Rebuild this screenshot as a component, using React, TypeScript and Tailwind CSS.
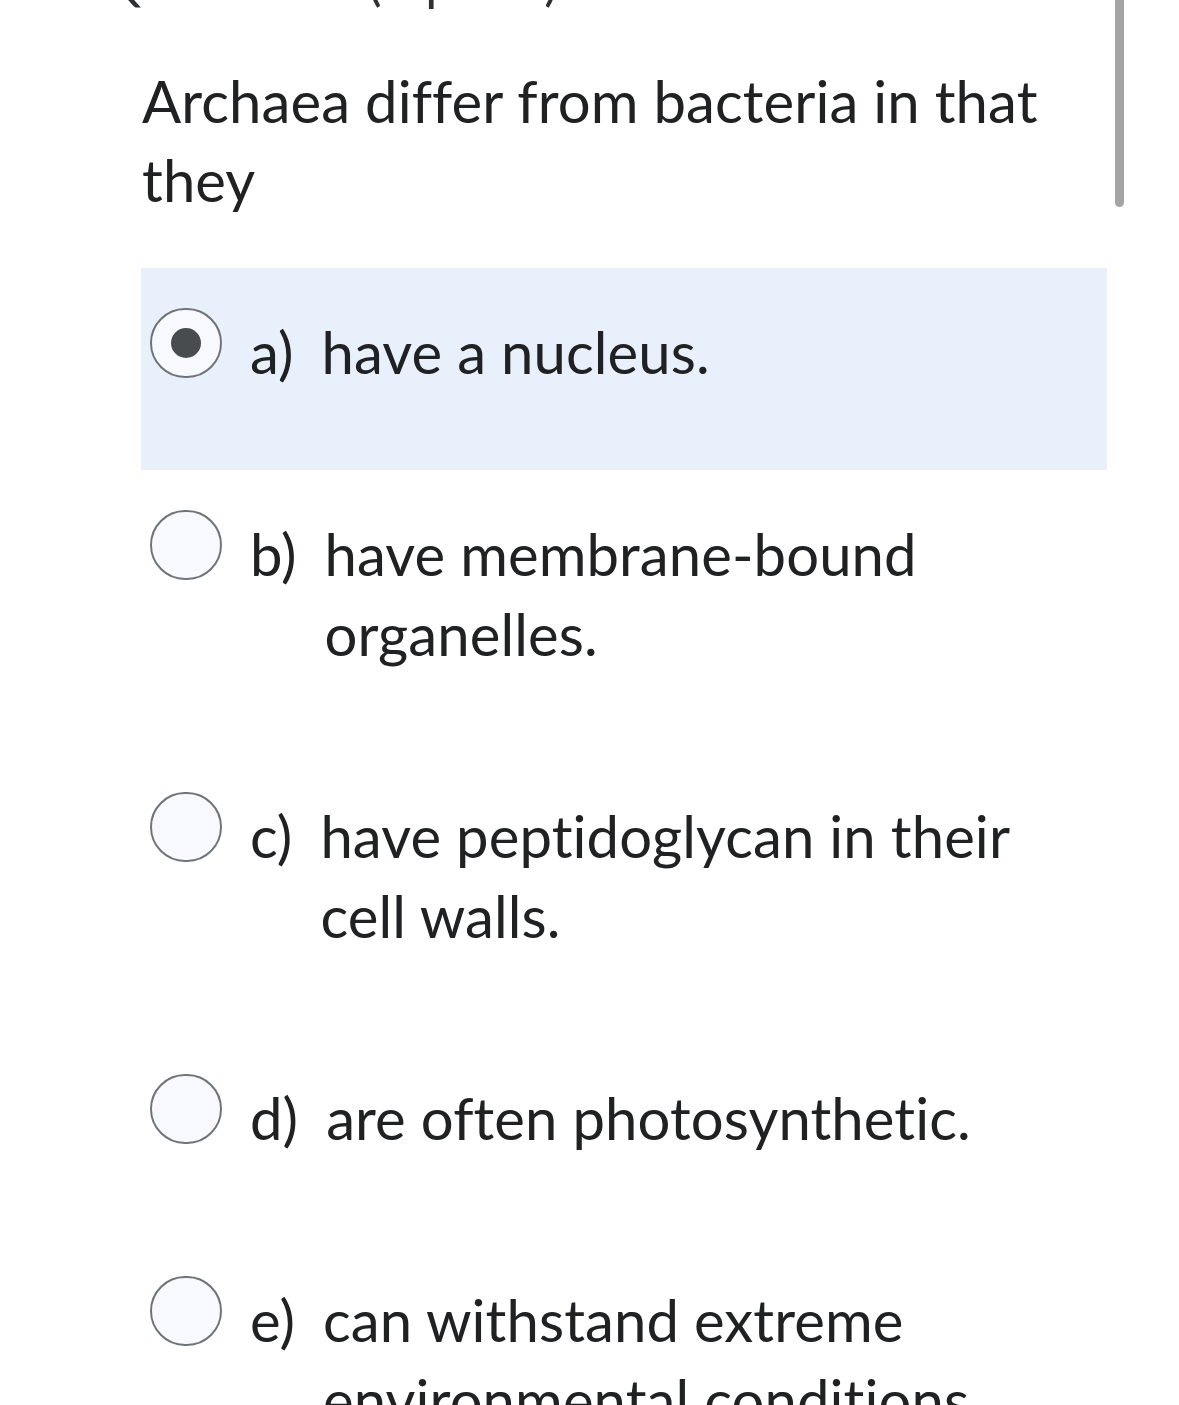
const options = [
  { label: "a)", lines: ["have a nucleus."], selected: true },
  { label: "b)", lines: ["have membrane-bound", "organelles."] },
  { label: "c)", lines: ["have peptidoglycan in their", "cell walls."] },
  { label: "d)", lines: ["are often photosynthetic."] },
  { label: "e)", lines: ["can withstand extreme", "environmental conditions."] },
];

function Radio({ checked }: { checked?: boolean }) {
  return (
    <span className="flex h-[70px] w-[72px] shrink-0 items-center justify-center rounded-full border-[2.5px] border-[#6f7478] bg-[#f8f9fe]">
      {checked && <span className="h-[30px] w-[30px] rounded-full bg-[#494c4f]" />}
    </span>
  );
}

export default function App() {
  return (
    <div className="relative h-[1405px] w-[1179px] overflow-hidden bg-white font-['Lato',sans-serif] tracking-[0.1px] text-[#202122] [font-variant-ligatures:none]">
      <div className="-mt-[46px] flex h-[52px] items-start pl-[100px] text-[52px] leading-none text-[#2d2f31]">
        <span>Question 1 (1 point)</span>
        <span className="ml-[190px]">Saved</span>
      </div>

      <div className="ml-[141px] w-[966px]">
        <h2 className="mt-[55px] pl-px text-[58px] font-normal leading-[79px]">
          Archaea differ from bacteria in that they
        </h2>

        <div className="mt-[49px]">
          {options.map((o) => (
            <div
              key={o.label}
              className={
                "flex items-start gap-7 pb-[78px] pl-[9px] pt-10 " +
                (o.selected ? "bg-[#e8f0fb]" : "")
              }
            >
              <Radio checked={o.selected} />
              <div className="mt-1 flex gap-7 text-[58px] leading-[80px]">
                <span>{o.label}</span>
                <div>
                  {o.lines.map((l) => (
                    <div key={l} className="whitespace-nowrap">{l}</div>
                  ))}
                </div>
              </div>
            </div>
          ))}
        </div>
      </div>

      <div className="absolute right-[55px] top-0 h-[207px] w-[9px] rounded-b-full bg-[#a4a4a4]" />
    </div>
  );
}
